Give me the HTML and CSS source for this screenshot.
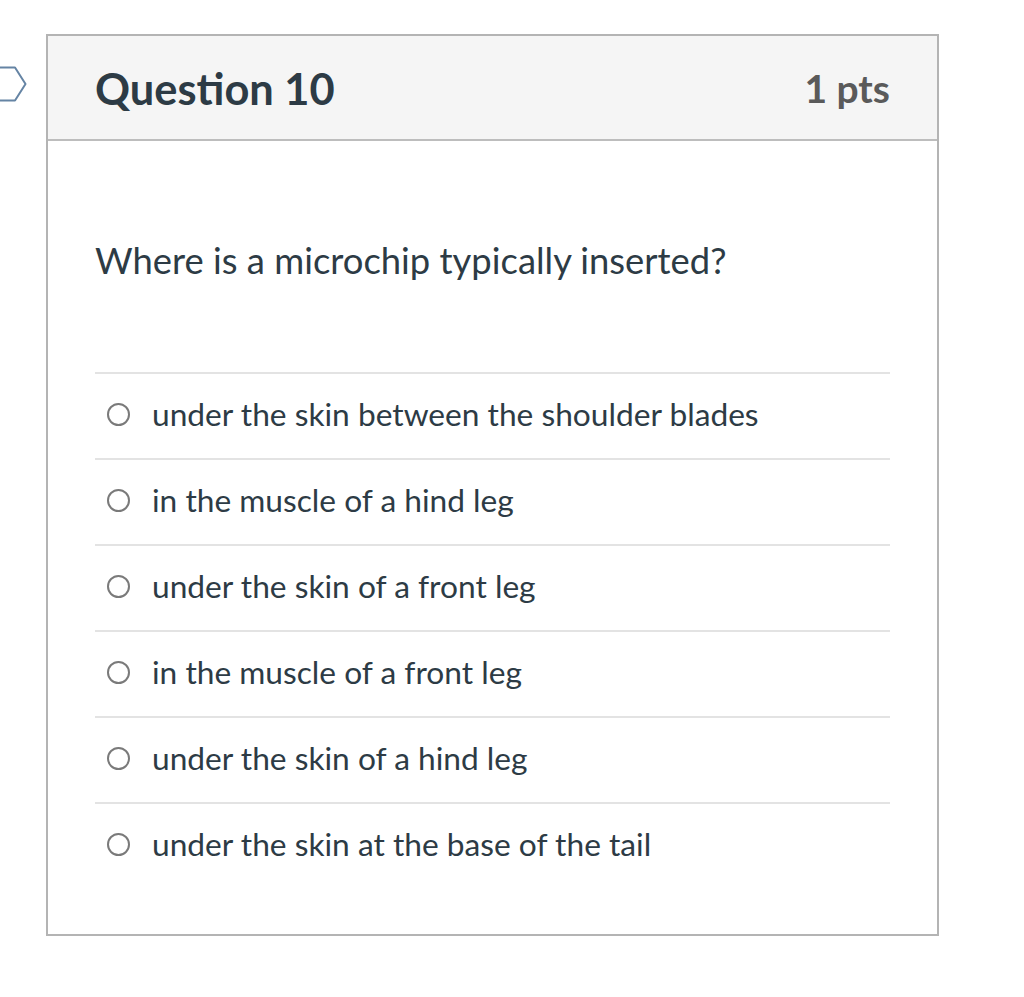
FILE: index.html
```html
<!DOCTYPE html>
<html>
<head>
<meta charset="utf-8">
<link rel="stylesheet" href="styles.css">
</head>
<body>
<svg class="flag" width="30" height="40" viewBox="0 0 30 40">
  <path d="M-5 1.5 L15 1.5 L25.5 18 L15 34.5 L-5 34.5" fill="none" stroke="#6584a4" stroke-width="2" stroke-linejoin="round"/>
</svg>
<div class="card">
  <div class="card-header">
    <div class="title">Question 10</div>
    <div class="points">1 pts</div>
  </div>
  <div class="card-body">
    <div class="question">Where is a microchip typically inserted?</div>
    <div class="answers">
      <div class="answer"><span class="radio"></span><span class="label">under the skin between the shoulder blades</span></div>
      <div class="answer"><span class="radio"></span><span class="label">in the muscle of a hind leg</span></div>
      <div class="answer"><span class="radio"></span><span class="label">under the skin of a front leg</span></div>
      <div class="answer"><span class="radio"></span><span class="label">in the muscle of a front leg</span></div>
      <div class="answer"><span class="radio"></span><span class="label">under the skin of a hind leg</span></div>
      <div class="answer"><span class="radio"></span><span class="label">under the skin at the base of the tail</span></div>
    </div>
  </div>
</div>
</body>
</html>
```
FILE: styles.css
```css
html, body {
  margin: 0;
  padding: 0;
  background: #ffffff;
  font-family: Lato, "Open Sans", sans-serif;
  color: #2d3b45;
}
body {
  position: relative;
  padding-top: 34px;
  padding-bottom: 40px;
}
.flag {
  position: absolute;
  left: 0;
  top: 66px;
}
.card {
  margin-left: 46px;
  width: 889px;
  border: 2px solid #b4b4b4;
  background: #fff;
}
.card-header {
  height: 105px;
  background: #f5f5f5;
  border-bottom: 2px solid #bdbdbd;
  display: flex;
  align-items: center;
  justify-content: space-between;
  padding: 0 47px;
  box-sizing: border-box;
}
.title {
  font-size: 43.4px;
  font-weight: 700;
  color: #2d3b45;
}
.points {
  font-size: 39px;
  font-weight: 700;
  color: #5a5a5a;
}
.card-body {
  padding: 97px 47px 46px;
}
.question {
  font-size: 36.4px;
  line-height: 44px;
  margin-bottom: 90px;
}
.answers {
  display: flex;
  flex-direction: column;
}
.answer {
  height: 86px;
  box-sizing: border-box;
  border-top: 2px solid #e3e3e3;
  display: flex;
  align-items: center;
  padding-left: 12px;
  padding-bottom: 4px;
}
.radio {
  width: 23px;
  height: 23px;
  box-sizing: border-box;
  border: 2px solid #7a7a7a;
  border-radius: 50%;
  flex: none;
  margin-right: 22px;
}
.label {
  font-size: 31.7px;
  color: #2d3b45;
}
```
